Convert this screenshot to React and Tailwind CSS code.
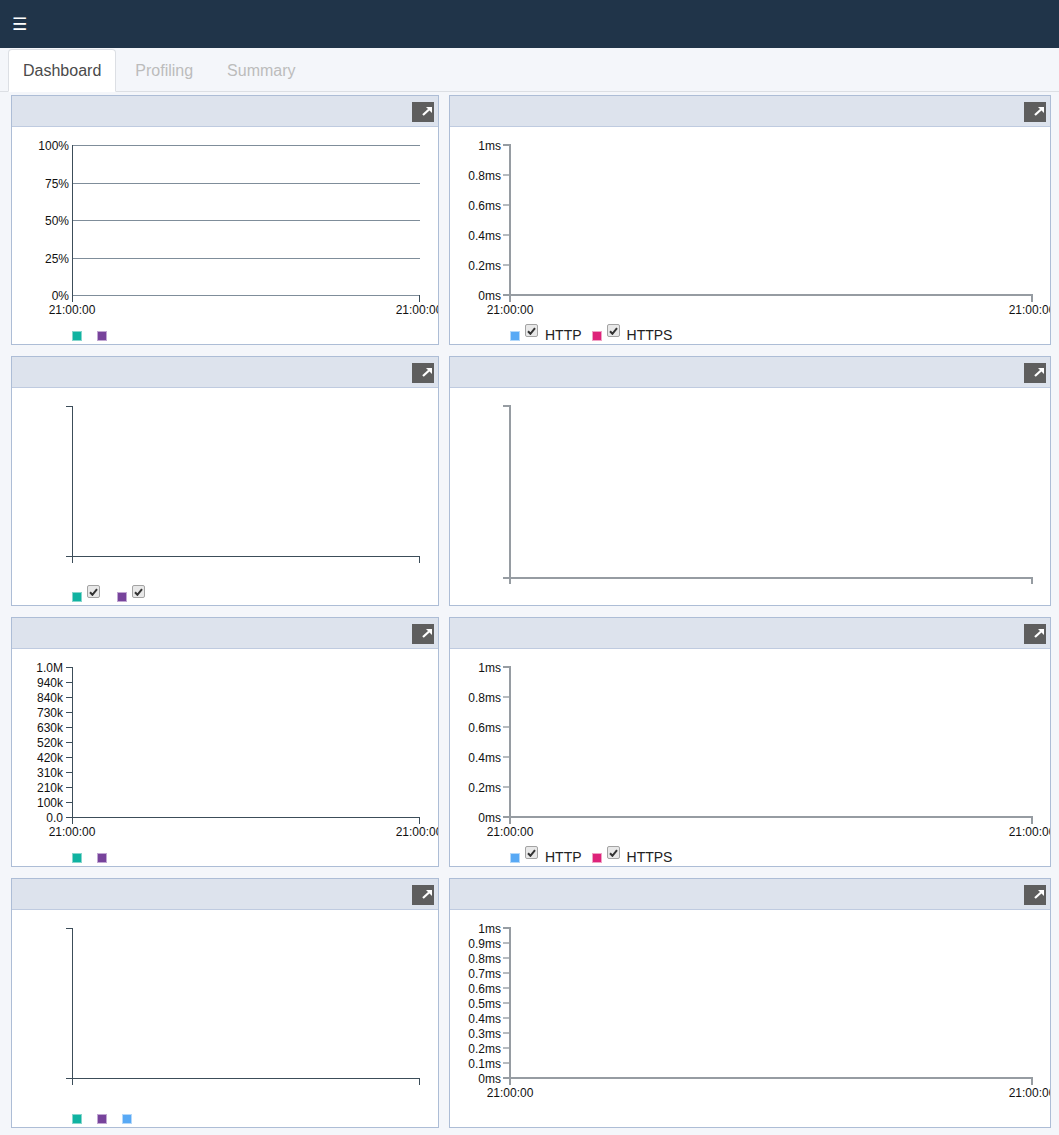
import React from "react";

const AX_DARK = "#3c4d59";
const GRID = "#7f8d9a";
const AX_GRAY = "#969ca2";
const TICK_GRAY = "#b6bbc0";

function ExpandBtn() {
  return (
    <div className="w-[22px] h-[20px] bg-[#5e5e5e]">
      <svg width="22" height="20" viewBox="0 0 22 20" className="block">
        <path d="M11 13 L17 7.5" stroke="#fff" strokeWidth="2.2" />
        <path d="M14 5 H20 V11 Z" fill="#fff" />
      </svg>
    </div>
  );
}

function Panel({ children, legend }) {
  return (
    <div className="border border-[#adbdd6] bg-white flex flex-col h-[250px] overflow-hidden">
      <div className="h-[31px] shrink-0 bg-[#dde3ed] border-b border-[#bfcbe0] flex justify-end items-start pt-[6px] pr-[4px]">
        <ExpandBtn />
      </div>
      <div className="flex-1 flex flex-col overflow-hidden">
        <div className="h-[196px] shrink-0 overflow-hidden">{children}</div>
        <div className="h-[21px] flex items-end pl-[60px] pb-[3px]">{legend}</div>
      </div>
    </div>
  );
}

function Sq({ kind }) {
  const cls = {
    teal: "bg-[#10b3a1] border-[#86d6cd]",
    purple: "bg-[#77439b] border-[#c1a7d3]",
    blue: "bg-[#58a9f5] border-[#b4d8fa]",
    pink: "bg-[#de237a] border-[#f0a3c6]",
  }[kind];
  return <span className={"block w-[10px] h-[10px] border shrink-0 " + cls} />;
}

function Check() {
  return (
    <span className="ml-[5px] mb-[4px] w-[13px] h-[13px] rounded-[2px] border border-[#a3a3a3] bg-[#e8e8e8] flex items-center justify-center shrink-0">
      <svg width="9" height="8" viewBox="0 0 9 8" className="block">
        <path d="M1 4.3 L3.4 6.8 L8 1.2" stroke="#333" strokeWidth="2" fill="none" />
      </svg>
    </span>
  );
}

function CheckItem({ kind, label }) {
  return (
    <div className="flex items-end mr-[10px]">
      <Sq kind={kind} />
      <Check />
      <span className="ml-[7px] text-[14px] leading-[14px] text-[#222] mb-[-1px]">{label}</span>
    </div>
  );
}

function XLabels({ right }) {
  return (
    <>
      <text x="60" y="187" textAnchor="middle" fontSize="12" fill="#111">21:00:00</text>
      <text x={right} y="187" textAnchor="middle" fontSize="12" fill="#111">21:00:00</text>
    </>
  );
}

function PercentChart() {
  const rows = [
    [18, "100%"],
    [56, "75%"],
    [93, "50%"],
    [131, "25%"],
    [168, "0%"],
  ];
  return (
    <svg width="426" height="196" className="block">
      {rows.map(([y, l]) => (
        <g key={l}>
          <line x1="60" x2="408" y1={y + 0.5} y2={y + 0.5} stroke={GRID} strokeWidth="1" />
          <text x="57" y={y + 4.5} textAnchor="end" fontSize="12" fill="#111">{l}</text>
        </g>
      ))}
      <line x1="60.5" x2="60.5" y1="18" y2="175" stroke={AX_DARK} />
      <line x1="407.5" x2="407.5" y1="168" y2="175" stroke={AX_DARK} />
      <XLabels right={407} />
    </svg>
  );
}

function EmptyLeft() {
  return (
    <svg width="426" height="196" className="block">
      <line x1="54" x2="61" y1="18.5" y2="18.5" stroke={AX_DARK} />
      <line x1="60.5" x2="60.5" y1="18" y2="175" stroke={AX_DARK} />
      <line x1="54" x2="408" y1="168.5" y2="168.5" stroke={AX_DARK} />
      <line x1="407.5" x2="407.5" y1="168" y2="175" stroke={AX_DARK} />
    </svg>
  );
}

function CountChart() {
  const labels = ["1.0M", "940k", "840k", "730k", "630k", "520k", "420k", "310k", "210k", "100k", "0.0"];
  return (
    <svg width="426" height="196" className="block">
      {labels.map((l, i) => {
        const y = 18 + i * 15;
        return (
          <g key={l}>
            <line x1="54" x2="61" y1={y + 0.5} y2={y + 0.5} stroke={AX_DARK} />
            <text x="51" y={y + 4.5} textAnchor="end" fontSize="12" fill="#111">{l}</text>
          </g>
        );
      })}
      <line x1="60.5" x2="60.5" y1="18" y2="175" stroke={AX_DARK} />
      <line x1="60" x2="408" y1="168.5" y2="168.5" stroke={AX_DARK} />
      <line x1="407.5" x2="407.5" y1="168" y2="175" stroke={AX_DARK} />
      <XLabels right={407} />
    </svg>
  );
}

function MsChart({ labels }) {
  const step = 150 / (labels.length - 1);
  return (
    <svg width="600" height="196" className="block">
      {labels.map((l, i) => {
        const y = 18 + i * step;
        return (
          <g key={l}>
            <line x1="53" x2="59" y1={y} y2={y} stroke={i === 0 || i === labels.length - 1 ? AX_GRAY : TICK_GRAY} strokeWidth="2" />
            <text x="51" y={y + 4.5} textAnchor="end" fontSize="12" fill="#111">{l}</text>
          </g>
        );
      })}
      <line x1="60" x2="60" y1="17" y2="175" stroke={AX_GRAY} strokeWidth="2" />
      <line x1="59" x2="583" y1="168" y2="168" stroke={AX_GRAY} strokeWidth="2" />
      <line x1="582" x2="582" y1="167" y2="175" stroke={AX_GRAY} strokeWidth="2" />
      <XLabels right={582} />
    </svg>
  );
}

function EmptyRight() {
  return (
    <svg width="600" height="196" className="block">
      <line x1="53" x2="60" y1="18" y2="18" stroke={AX_GRAY} strokeWidth="2" />
      <line x1="60" x2="60" y1="17" y2="197" stroke={AX_GRAY} strokeWidth="2" />
      <line x1="53" x2="583" y1="190" y2="190" stroke={AX_GRAY} strokeWidth="2" />
      <line x1="582" x2="582" y1="189" y2="197" stroke={AX_GRAY} strokeWidth="2" />
    </svg>
  );
}

const MS6 = ["1ms", "0.8ms", "0.6ms", "0.4ms", "0.2ms", "0ms"];
const MS11 = ["1ms", "0.9ms", "0.8ms", "0.7ms", "0.6ms", "0.5ms", "0.4ms", "0.3ms", "0.2ms", "0.1ms", "0ms"];

function SqLegend({ kinds }) {
  return (
    <div className="flex items-end gap-[15px]">
      {kinds.map((k) => (
        <Sq key={k} kind={k} />
      ))}
    </div>
  );
}

function HttpLegend() {
  return (
    <div className="flex items-end">
      <CheckItem kind="blue" label="HTTP" />
      <CheckItem kind="pink" label="HTTPS" />
    </div>
  );
}

export default function App() {
  return (
    <div className="min-h-screen bg-[#f4f6fa] font-['Liberation_Sans',Arial,sans-serif]">
      <div className="h-[48px] bg-[#203449] flex items-center px-[12px]">
        <span className="text-white text-[17px] leading-none font-['DejaVu_Sans',sans-serif]">☰</span>
      </div>
      <div className="h-[44px] border-b border-[#dcdfe4] flex items-end px-[8px] gap-[4px]">
        <div className="h-[43px] -mb-px px-[14px] flex items-center bg-white border border-[#dcdfe4] border-b-white rounded-t-[4px] text-[16px] text-[#4a4a4a]">
          Dashboard
        </div>
        <div className="h-[43px] -mb-px px-[15px] flex items-center text-[16px] text-[#bcbcbc]">
          Profiling
        </div>
        <div className="h-[43px] -mb-px px-[15px] flex items-center text-[16px] text-[#bcbcbc]">
          Summary
        </div>
      </div>
      <div className="pt-[3px] pl-[11px] pb-[7px] grid grid-cols-[428px_602px] gap-x-[10px] gap-y-[11px]">
        <Panel legend={<SqLegend kinds={["teal", "purple"]} />}>
          <PercentChart />
        </Panel>
        <Panel legend={<HttpLegend />}>
          <MsChart labels={MS6} />
        </Panel>
        <Panel
          legend={
            <div className="flex items-end">
              <CheckItem kind="teal" label="" />
              <CheckItem kind="purple" label="" />
            </div>
          }
        >
          <EmptyLeft />
        </Panel>
        <Panel legend={null}>
          <EmptyRight />
        </Panel>
        <Panel legend={<SqLegend kinds={["teal", "purple"]} />}>
          <CountChart />
        </Panel>
        <Panel legend={<HttpLegend />}>
          <MsChart labels={MS6} />
        </Panel>
        <Panel legend={<SqLegend kinds={["teal", "purple", "blue"]} />}>
          <EmptyLeft />
        </Panel>
        <Panel legend={null}>
          <MsChart labels={MS11} />
        </Panel>
      </div>
    </div>
  );
}
